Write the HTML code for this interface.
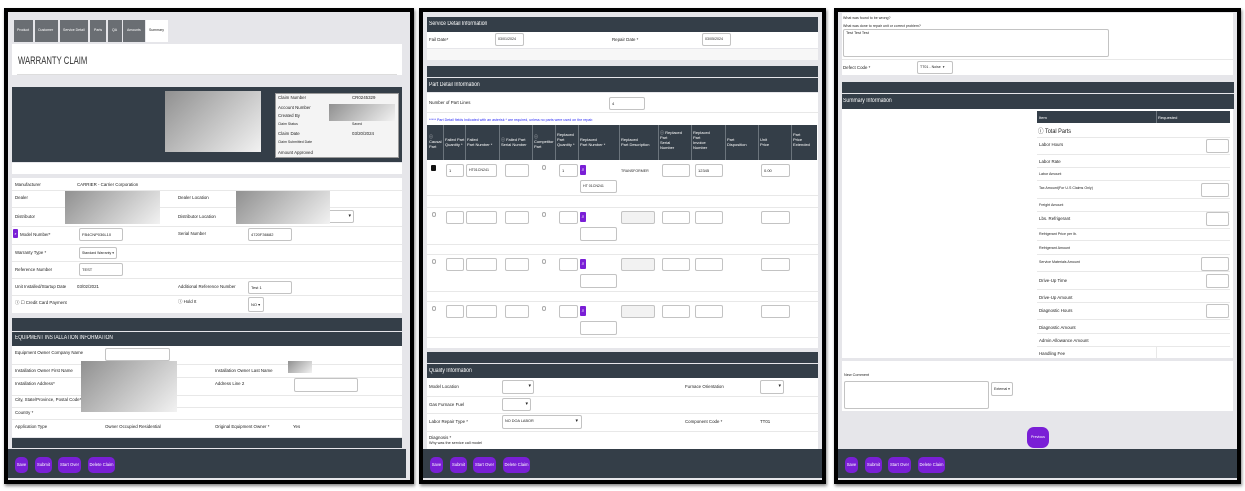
<!DOCTYPE html>
<html><head><meta charset="utf-8"><style>
*{box-sizing:border-box;margin:0;padding:0}
body{width:1245px;height:491px;background:#fff;position:relative;overflow:hidden;font-family:"Liberation Sans Narrow","Liberation Sans",sans-serif}
div,span{position:absolute}
.fr{border:4px solid #000;background:#e6e6ea;box-shadow:1px 2px 3px #888}
.w{background:#fff}
.dk{background:#343e48}
.t{font-size:4.4px;color:#222;white-space:nowrap;line-height:5px}
.h{font-size:6px;color:#fff;white-space:nowrap;line-height:8px}
.in{border:1px solid #c3c3c3;background:#fff;border-radius:2px;font-size:4px;color:#222;padding:0 2px;line-height:11px;white-space:nowrap}
.g{background:linear-gradient(135deg,#909090,#f2f2f2)}
.ln{height:1px;background:#e8e8e8}
.b{background:#7a1fd6;color:#fff;font-size:4.2px;border-radius:5px;text-align:center;line-height:16px}
.pi{background:#7a1fd6;border-radius:1px;width:6px;height:10px;color:#fff;font-size:5px;text-align:center;line-height:10px}
.th{font-size:4px;color:#fff;line-height:5px}
.cb{width:4px;height:5px;border:1px solid #aaa;border-radius:2px;background:#fff}
.sep{width:1px;background:#6b747c}
</style></head><body>

<!-- PANEL 1 -->
<div class="fr" style="left:4px;top:8px;width:410px;height:476px"></div>
<div style="left:14px;top:20px;width:19px;height:22px;background:#6a6e73"></div><div class="t" style="left:17px;top:28px;color:#fff;font-size:3.5px">Product</div>
<div style="left:35px;top:20px;width:23px;height:22px;background:#6a6e73"></div><div class="t" style="left:38px;top:28px;color:#fff;font-size:3.5px">Customer</div>
<div style="left:60px;top:20px;width:28px;height:22px;background:#6a6e73"></div><div class="t" style="left:63px;top:28px;color:#fff;font-size:3.5px">Service Detail</div>
<div style="left:90px;top:20px;width:16px;height:22px;background:#6a6e73"></div><div class="t" style="left:94px;top:28px;color:#fff;font-size:3.5px">Parts</div>
<div style="left:108px;top:20px;width:14px;height:22px;background:#6a6e73"></div><div class="t" style="left:112px;top:28px;color:#fff;font-size:3.5px">QA</div>
<div style="left:123px;top:20px;width:22px;height:22px;background:#6a6e73"></div><div class="t" style="left:127px;top:28px;color:#fff;font-size:3.5px">Amounts</div>
<div class="w" style="left:146px;top:20px;width:22px;height:22px"></div><div class="t" style="left:149px;top:28px;font-size:3.5px">Summary</div>
<div class="w" style="left:12px;top:44px;width:390px;height:31px"></div>
<div style="left:18px;top:55px;font-size:11px;color:#333;transform:scaleX(.7);transform-origin:left;white-space:nowrap">WARRANTY CLAIM</div>
<div class="ln" style="left:17px;top:74px;width:380px;background:#ddd"></div>
<div class="dk" style="left:12px;top:87px;width:390px;height:75px"></div>
<div class="g" style="left:165px;top:91px;width:96px;height:61px"></div>
<div style="left:275px;top:93px;width:124px;height:65px;background:#f4f4f4;border:1px solid #999"></div>
<div class="t" style="left:278px;top:95px">Claim Number</div><div class="t" style="left:352px;top:95px">CR0245329</div>
<div class="t" style="left:278px;top:105px">Account Number</div><div class="t" style="left:278px;top:113px">Created By</div>
<div class="g" style="left:329px;top:104px;width:66px;height:17px"></div>
<div class="t" style="left:278px;top:122px;font-size:3.5px">Claim Status</div><div class="t" style="left:352px;top:122px;font-size:3.5px">Saved</div>
<div class="t" style="left:278px;top:131px">Claim Date</div><div class="t" style="left:352px;top:131px">03/20/2024</div>
<div class="t" style="left:278px;top:140px;font-size:3.5px">Claim Submitted Date</div>
<div class="t" style="left:278px;top:150px">Amount Approved</div>
<div class="w" style="left:12px;top:163px;width:390px;height:11px"></div>
<div class="w" style="left:12px;top:178px;width:390px;height:135px"></div>
<div class="t" style="left:15px;top:182px">Manufacturer</div><div class="t" style="left:77px;top:182px">CARRIER - Carrier Corporation</div>
<div class="ln" style="left:12px;top:190px;width:390px"></div>
<div class="t" style="left:15px;top:195px">Dealer</div><div class="t" style="left:178px;top:195px">Dealer Location</div>
<div class="ln" style="left:12px;top:207px;width:390px"></div>
<div class="t" style="left:15px;top:214px">Distributor</div><div class="t" style="left:178px;top:214px">Distributor Location</div>
<div class="in" style="left:320px;top:210px;width:34px;height:13px;text-align:right;font-size:5px">▾</div>
<div class="g" style="left:65px;top:191px;width:95px;height:33px"></div>
<div class="g" style="left:236px;top:191px;width:94px;height:33px"></div>
<div class="ln" style="left:12px;top:226px;width:390px"></div>
<div class="pi" style="left:13px;top:229px;width:5px;height:9px;font-size:4px;line-height:9px">⌕</div>
<div class="t" style="left:20px;top:232px">Model Number*</div>
<div class="in" style="left:79px;top:228px;width:44px;height:13px">FB4CNP036L10</div>
<div class="t" style="left:178px;top:231px">Serial Number</div>
<div class="in" style="left:248px;top:228px;width:44px;height:13px">4720F36682</div>
<div class="ln" style="left:12px;top:244px;width:390px"></div>
<div class="t" style="left:15px;top:250px">Warranty Type *</div>
<div class="in" style="left:79px;top:247px;width:38px;height:12px;font-size:3.5px">Standard Warranty ▾</div>
<div class="ln" style="left:12px;top:261px;width:390px"></div>
<div class="t" style="left:15px;top:267px">Reference Number</div>
<div class="in" style="left:79px;top:263px;width:44px;height:13px">TEST</div>
<div class="ln" style="left:12px;top:278px;width:390px"></div>
<div class="t" style="left:15px;top:284px">Unit Installed/Startup Date</div><div class="t" style="left:77px;top:284px">03/02/2021</div>
<div class="t" style="left:178px;top:284px">Additional Reference Number</div>
<div class="in" style="left:248px;top:281px;width:44px;height:13px">Test 1</div>
<div class="ln" style="left:12px;top:295px;width:390px"></div>
<div class="t" style="left:15px;top:300px">ⓘ ☐ Credit Card Payment</div><div class="t" style="left:178px;top:299px">ⓘ Hold It</div>
<div class="in" style="left:248px;top:297px;width:16px;height:15px;line-height:13px">NO ▾</div>
<div class="dk" style="left:12px;top:318px;width:390px;height:13px"></div>
<div class="dk" style="left:12px;top:332px;width:390px;height:14px"></div>
<div class="h" style="left:15px;top:334px;transform:scaleX(.8);transform-origin:left">EQUIPMENT INSTALLATION INFORMATION</div>
<div class="w" style="left:12px;top:346px;width:390px;height:91px"></div>
<div class="t" style="left:15px;top:350px">Equipment Owner Company Name</div>
<div class="in" style="left:105px;top:348px;width:65px;height:13px"></div>
<div class="ln" style="left:12px;top:364px;width:390px"></div>
<div class="t" style="left:15px;top:368px">Installation Owner First Name</div><div class="t" style="left:215px;top:368px">Installation Owner Last Name</div>
<div class="g" style="left:288px;top:361px;width:24px;height:12px"></div>
<div class="ln" style="left:12px;top:377px;width:390px"></div>
<div class="t" style="left:15px;top:381px">Installation Address*</div><div class="t" style="left:215px;top:381px">Address Line 2</div>
<div class="in" style="left:294px;top:378px;width:64px;height:14px"></div>
<div class="ln" style="left:12px;top:395px;width:390px"></div>
<div class="t" style="left:15px;top:397px">City, State/Province, Postal Code*</div>
<div class="ln" style="left:12px;top:407px;width:390px"></div>
<div class="t" style="left:15px;top:410px">Country *</div>
<div class="ln" style="left:12px;top:419px;width:390px"></div>
<div class="t" style="left:15px;top:424px">Application Type</div><div class="t" style="left:105px;top:424px">Owner Occupied Residential</div>
<div class="t" style="left:215px;top:424px">Original Equipment Owner *</div><div class="t" style="left:293px;top:424px">Yes</div>
<div class="g" style="left:81px;top:361px;width:96px;height:51px"></div>
<div class="dk" style="left:12px;top:438px;width:390px;height:10px"></div>
<div class="dk" style="left:8px;top:449px;width:398px;height:29px"></div>

<!-- PANEL 2 -->
<div class="fr" style="left:419px;top:8px;width:407px;height:476px"></div>
<div class="dk" style="left:427px;top:17px;width:391px;height:15px"></div>
<div class="h" style="left:429px;top:20px;transform:scaleX(.85);transform-origin:left">Service Detail Information</div>
<div class="w" style="left:427px;top:32px;width:391px;height:16px"></div>
<div class="t" style="left:429px;top:37px">Fail Date*</div>
<div class="in" style="left:495px;top:33px;width:29px;height:13px;font-size:3.6px">03/01/2024</div>
<div class="t" style="left:612px;top:37px">Repair Date *</div>
<div class="in" style="left:702px;top:33px;width:29px;height:13px;font-size:3.6px">03/05/2024</div>
<div style="left:427px;top:49px;width:391px;height:11px;background:#f7f7f7"></div>
<div class="dk" style="left:427px;top:66px;width:391px;height:11px"></div>
<div class="dk" style="left:427px;top:78px;width:391px;height:14px"></div>
<div class="h" style="left:429px;top:81px;transform:scaleX(.85);transform-origin:left">Part Detail Information</div>
<div class="w" style="left:427px;top:93px;width:391px;height:255px"></div>
<div class="t" style="left:429px;top:100px">Number of Part Lines</div>
<div class="in" style="left:609px;top:97px;width:36px;height:13px">4</div>
<div class="ln" style="left:427px;top:112px;width:391px"></div>
<div class="t" style="left:429px;top:118px;color:#2a2af5;font-size:3.6px">***** Part Detail fields Indicated with an asterisk * are required, unless no parts were used on the repair.</div>
<div class="dk" style="left:427px;top:125px;width:390px;height:35px"></div>
<div class="sep" style="left:443px;top:125px;height:35px"></div><div class="sep" style="left:465px;top:125px;height:35px"></div><div class="sep" style="left:499px;top:125px;height:35px"></div><div class="sep" style="left:532px;top:125px;height:35px"></div><div class="sep" style="left:555px;top:125px;height:35px"></div><div class="sep" style="left:578px;top:125px;height:35px"></div><div class="sep" style="left:619px;top:125px;height:35px"></div><div class="sep" style="left:658px;top:125px;height:35px"></div><div class="sep" style="left:691px;top:125px;height:35px"></div><div class="sep" style="left:725px;top:125px;height:35px"></div><div class="sep" style="left:758px;top:125px;height:35px"></div><div class="sep" style="left:791px;top:125px;height:35px"></div>
<div class="th" style="left:429px;top:134px">ⓘ<br>Causal<br>Part</div>
<div class="th" style="left:445px;top:137px">Failed Part<br>Quantity *</div>
<div class="th" style="left:467px;top:137px">Failed<br>Part Number *</div>
<div class="th" style="left:501px;top:137px">ⓘ Failed Part<br>Serial Number</div>
<div class="th" style="left:534px;top:134px">ⓘ<br>Competitor<br>Part</div>
<div class="th" style="left:557px;top:132px">Replaced<br>Part<br>Quantity *</div>
<div class="th" style="left:580px;top:137px">Replaced<br>Part Number *</div>
<div class="th" style="left:621px;top:137px">Replaced<br>Part Description</div>
<div class="th" style="left:660px;top:130px">ⓘ Replaced<br>Part<br>Serial<br>Number</div>
<div class="th" style="left:693px;top:130px">Replaced<br>Part<br>Invoice<br>Number</div>
<div class="th" style="left:727px;top:137px">Part<br>Disposition</div>
<div class="th" style="left:760px;top:137px">Unit<br>Price</div>
<div class="th" style="left:793px;top:132px">Part<br>Price<br>Extended</div>
<div style="left:431px;top:165px;width:5px;height:6px;background:#111;border-radius:1px"></div>
<div class="in" style="left:446px;top:164px;width:18px;height:13px">1</div>
<div class="in" style="left:466px;top:164px;width:31px;height:13px;font-size:3.6px">HT01CN241</div>
<div class="in" style="left:505px;top:164px;width:24px;height:13px"></div>
<div class="cb" style="left:542px;top:165px"></div>
<div class="in" style="left:559px;top:164px;width:19px;height:13px">1</div>
<div class="pi" style="left:580px;top:165px">⌕</div>
<div class="t" style="left:621px;top:169px;font-size:3.6px">TRANSFORMER</div>
<div class="in" style="left:662px;top:164px;width:28px;height:13px"></div>
<div class="in" style="left:695px;top:164px;width:28px;height:13px">12345</div>
<div class="in" style="left:761px;top:164px;width:29px;height:13px">0.00</div>
<div class="in" style="left:580px;top:180px;width:37px;height:13px;font-size:3.6px">HT 01CN241</div>
<div class="ln" style="left:427px;top:195px;width:391px"></div>
<div class="ln" style="left:427px;top:207px;width:391px"></div>
<div class="cb" style="left:432px;top:212px"></div><div class="in" style="left:446px;top:211px;width:18px;height:13px"></div><div class="in" style="left:466px;top:211px;width:31px;height:13px"></div><div class="in" style="left:505px;top:211px;width:24px;height:13px"></div><div class="cb" style="left:542px;top:212px"></div><div class="in" style="left:559px;top:211px;width:19px;height:13px"></div><div class="pi" style="left:580px;top:212px">⌕</div><div class="in" style="left:621px;top:211px;width:34px;height:13px;background:#f2f2f2"></div><div class="in" style="left:662px;top:211px;width:28px;height:13px"></div><div class="in" style="left:695px;top:211px;width:28px;height:13px"></div><div class="in" style="left:761px;top:211px;width:29px;height:13px"></div><div class="in" style="left:580px;top:227px;width:37px;height:14px"></div>
<div class="ln" style="left:427px;top:244px;width:391px"></div><div class="ln" style="left:427px;top:254px;width:391px"></div>
<div class="cb" style="left:432px;top:259px"></div><div class="in" style="left:446px;top:258px;width:18px;height:13px"></div><div class="in" style="left:466px;top:258px;width:31px;height:13px"></div><div class="in" style="left:505px;top:258px;width:24px;height:13px"></div><div class="cb" style="left:542px;top:259px"></div><div class="in" style="left:559px;top:258px;width:19px;height:13px"></div><div class="pi" style="left:580px;top:259px">⌕</div><div class="in" style="left:621px;top:258px;width:34px;height:13px;background:#f2f2f2"></div><div class="in" style="left:662px;top:258px;width:28px;height:13px"></div><div class="in" style="left:695px;top:258px;width:28px;height:13px"></div><div class="in" style="left:761px;top:258px;width:29px;height:13px"></div><div class="in" style="left:580px;top:274px;width:37px;height:14px"></div>
<div class="ln" style="left:427px;top:291px;width:391px"></div><div class="ln" style="left:427px;top:301px;width:391px"></div>
<div class="cb" style="left:432px;top:306px"></div><div class="in" style="left:446px;top:305px;width:18px;height:13px"></div><div class="in" style="left:466px;top:305px;width:31px;height:13px"></div><div class="in" style="left:505px;top:305px;width:24px;height:13px"></div><div class="cb" style="left:542px;top:306px"></div><div class="in" style="left:559px;top:305px;width:19px;height:13px"></div><div class="pi" style="left:580px;top:306px">⌕</div><div class="in" style="left:621px;top:305px;width:34px;height:13px;background:#f2f2f2"></div><div class="in" style="left:662px;top:305px;width:28px;height:13px"></div><div class="in" style="left:695px;top:305px;width:28px;height:13px"></div><div class="in" style="left:761px;top:305px;width:29px;height:13px"></div><div class="in" style="left:580px;top:321px;width:37px;height:14px"></div>
<div class="ln" style="left:427px;top:337px;width:391px"></div>
<div class="dk" style="left:427px;top:352px;width:391px;height:11px"></div>
<div class="dk" style="left:427px;top:364px;width:391px;height:14px"></div>
<div class="h" style="left:429px;top:367px;transform:scaleX(.85);transform-origin:left">Quality Information</div>
<div class="w" style="left:427px;top:378px;width:391px;height:71px"></div>
<div class="t" style="left:429px;top:384px">Model Location</div>
<div class="in" style="left:502px;top:380px;width:32px;height:14px;text-align:right;font-size:5px">▾</div>
<div class="t" style="left:685px;top:384px">Furnace Orientation</div>
<div class="in" style="left:760px;top:380px;width:24px;height:14px;text-align:right;font-size:5px">▾</div>
<div class="ln" style="left:427px;top:396px;width:391px"></div>
<div class="t" style="left:429px;top:402px">Gas Furnace Fuel</div>
<div class="in" style="left:502px;top:398px;width:29px;height:13px;text-align:right;font-size:5px">▾</div>
<div class="ln" style="left:427px;top:413px;width:391px"></div>
<div class="t" style="left:429px;top:419px">Labor Repair Type *</div>
<div class="in" style="left:502px;top:415px;width:80px;height:14px;font-size:3.8px">NO DOA LABOR<span style="right:3px;top:0;font-size:5px">▾</span></div>
<div class="t" style="left:685px;top:419px">Component Code *</div><div class="t" style="left:760px;top:419px">TT01</div>
<div class="ln" style="left:427px;top:431px;width:391px"></div>
<div class="t" style="left:429px;top:435px">Diagnosis *</div>
<div class="t" style="left:429px;top:441px;font-size:3.8px">Why was the service call model</div>
<div class="dk" style="left:423px;top:449px;width:399px;height:29px"></div>

<!-- PANEL 3 -->
<div class="fr" style="left:834px;top:8px;width:407px;height:476px"></div>
<div class="w" style="left:842px;top:13px;width:391px;height:62px"></div>
<div class="t" style="left:843px;top:16px;font-size:3.6px">What was found to be wrong?</div>
<div class="t" style="left:843px;top:24px;font-size:3.6px">What was done to repair unit or correct problem?</div>
<div class="in" style="left:843px;top:29px;width:266px;height:28px;line-height:7px;font-size:3.8px">Test Test Test</div>
<div class="ln" style="left:842px;top:59px;width:391px"></div>
<div class="t" style="left:843px;top:65px">Defect Code *</div>
<div class="in" style="left:917px;top:61px;width:36px;height:13px;font-size:3.6px">TT01 - Noise &nbsp;▾</div>
<div class="dk" style="left:842px;top:82px;width:392px;height:11px"></div>
<div class="dk" style="left:842px;top:94px;width:392px;height:15px"></div>
<div class="h" style="left:843px;top:97px;transform:scaleX(.85);transform-origin:left">Summary Information</div>
<div class="w" style="left:842px;top:109px;width:391px;height:249px"></div>
<div class="dk" style="left:1037px;top:111px;width:193px;height:12px"></div>
<div class="sep" style="left:1156px;top:111px;height:12px"></div>
<div class="th" style="left:1039px;top:115px">Item</div><div class="th" style="left:1158px;top:115px">Requested</div>
<div style="left:1038px;top:125px;font-size:6.5px;color:#222;white-space:nowrap;transform:scaleX(.85);transform-origin:left">ⓘ Total Parts</div>
<div class="ln" style="left:1037px;top:137px;width:193px"></div>
<div class="t" style="left:1039px;top:142px">Labor Hours</div><div class="in" style="left:1206px;top:139px;width:23px;height:14px"></div>
<div class="ln" style="left:1037px;top:154px;width:193px"></div>
<div class="t" style="left:1039px;top:159px">Labor Rate</div>
<div class="ln" style="left:1037px;top:167px;width:193px"></div>
<div class="t" style="left:1039px;top:172px;font-size:3.6px">Labor Amount</div>
<div class="ln" style="left:1037px;top:180px;width:193px"></div>
<div class="t" style="left:1039px;top:186px;font-size:3.6px">Tax Amount(For U.S Claims Only)</div><div class="in" style="left:1201px;top:183px;width:28px;height:14px"></div>
<div class="ln" style="left:1037px;top:198px;width:193px"></div>
<div class="t" style="left:1039px;top:203px;font-size:3.6px">Freight Amount</div>
<div class="ln" style="left:1037px;top:211px;width:193px"></div>
<div class="t" style="left:1039px;top:216px">Lbs. Refrigerant</div><div class="in" style="left:1206px;top:212px;width:23px;height:14px"></div>
<div class="ln" style="left:1037px;top:228px;width:193px"></div>
<div class="t" style="left:1039px;top:232px;font-size:3.6px">Refrigerant Price per lb.</div>
<div class="ln" style="left:1037px;top:240px;width:193px"></div>
<div class="t" style="left:1039px;top:246px;font-size:3.6px">Refrigerant Amount</div>
<div class="ln" style="left:1037px;top:254px;width:193px"></div>
<div class="t" style="left:1039px;top:260px;font-size:3.6px">Service Materials Amount</div><div class="in" style="left:1201px;top:257px;width:28px;height:14px"></div>
<div class="ln" style="left:1037px;top:271px;width:193px"></div>
<div class="t" style="left:1039px;top:278px">Drive-Up Time</div><div class="in" style="left:1206px;top:274px;width:23px;height:14px"></div>
<div class="ln" style="left:1037px;top:289px;width:193px"></div>
<div class="t" style="left:1039px;top:295px">Drive-Up Amount</div>
<div class="ln" style="left:1037px;top:302px;width:193px"></div>
<div class="t" style="left:1039px;top:308px">Diagnostic Hours</div><div class="in" style="left:1206px;top:304px;width:23px;height:14px"></div>
<div class="ln" style="left:1037px;top:319px;width:193px"></div>
<div class="t" style="left:1039px;top:325px">Diagnostic Amount</div>
<div class="ln" style="left:1037px;top:333px;width:193px"></div>
<div class="t" style="left:1039px;top:338px">Admin Allowance Amount</div>
<div class="ln" style="left:1037px;top:346px;width:193px"></div>
<div class="t" style="left:1039px;top:351px">Handling Fee</div>
<div class="ln" style="left:1156px;top:346px;width:1px;height:12px"></div>
<div class="w" style="left:842px;top:361px;width:391px;height:50px"></div>
<div class="t" style="left:844px;top:373px;font-size:3.8px">New Comment</div>
<div class="in" style="left:844px;top:381px;width:145px;height:28px"></div>
<div class="in" style="left:991px;top:382px;width:22px;height:14px;font-size:3.6px;line-height:12px">External ▾</div>
<div class="b" style="left:1027px;top:427px;width:22px;height:21px;line-height:21px;border-radius:7px;font-size:3.6px">Previous</div>
<div class="dk" style="left:838px;top:449px;width:399px;height:29px"></div>

<div class="b" style="left:15px;top:457px;width:13px;height:16px">Save</div>
<div class="b" style="left:35px;top:457px;width:17px;height:16px">Submit</div>
<div class="b" style="left:58px;top:457px;width:23px;height:16px">Start Over</div>
<div class="b" style="left:88px;top:457px;width:27px;height:16px">Delete Claim</div>
<div class="b" style="left:430px;top:457px;width:13px;height:16px">Save</div>
<div class="b" style="left:450px;top:457px;width:17px;height:16px">Submit</div>
<div class="b" style="left:473px;top:457px;width:23px;height:16px">Start Over</div>
<div class="b" style="left:503px;top:457px;width:27px;height:16px">Delete Claim</div>
<div class="b" style="left:845px;top:457px;width:13px;height:16px">Save</div>
<div class="b" style="left:865px;top:457px;width:17px;height:16px">Submit</div>
<div class="b" style="left:888px;top:457px;width:23px;height:16px">Start Over</div>
<div class="b" style="left:918px;top:457px;width:27px;height:16px">Delete Claim</div>
</body></html>
